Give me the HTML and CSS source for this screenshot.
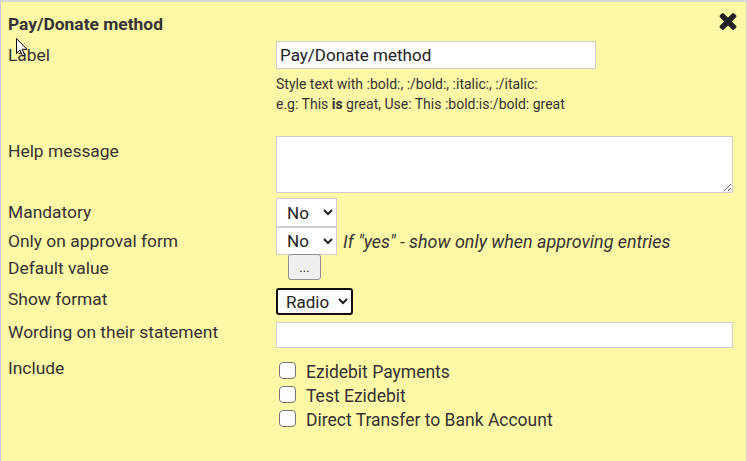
FILE: index.html
```html
<!DOCTYPE html>
<html lang="en">
<head>
<meta charset="utf-8">
<title>Pay/Donate method</title>
<link rel="stylesheet" href="styles.css">
</head>
<body>
<div class="panel">
  <div class="head">
    <h1 class="title">Pay/Donate method</h1>
    <button class="close" type="button" aria-label="Close">
      <svg viewBox="110 366 1188 1188" width="18" height="17"><path fill="#222" d="M1298 1322q0 40-28 68l-136 136q-28 28-68 28t-68-28l-294-294-294 294q-28 28-68 28t-68-28l-136-136q-28-28-28-68t28-68l294-294-294-294q-28-28-28-68t28-68l136-136q28-28 68-28t68 28l294 294 294-294q28-28 68-28t68 28l136 136q28 28 28 68t-28 68l-294 294 294 294q28 28 28 68z"/></svg>
    </button>
  </div>

  <div class="row row-label">
    <div class="lbl">Label</div>
    <div class="val">
      <input class="text short" type="text" value="Pay/Donate method">
      <div class="hint">Style text with :bold:, :/bold:, :italic:, :/italic:</div>
      <div class="hint">e.g: This <b>is</b> great, Use: This :bold:is:/bold: great</div>
    </div>
  </div>

  <div class="row row-help">
    <div class="lbl">Help message</div>
    <div class="val"><textarea class="area"></textarea></div>
  </div>

  <div class="row row-mand">
    <div class="lbl">Mandatory</div>
    <div class="val"><select class="sel"><option>No</option><option>Yes</option></select></div>
  </div>

  <div class="row row-appr">
    <div class="lbl">Only on approval form</div>
    <div class="val inline"><select class="sel"><option>No</option><option>Yes</option></select><span class="note">If "yes" - show only when approving entries</span></div>
  </div>

  <div class="row row-def">
    <div class="lbl">Default value</div>
    <div class="val"><button class="dots" type="button">...</button></div>
  </div>

  <div class="row row-fmt">
    <div class="lbl">Show format</div>
    <div class="val"><select class="sel focus"><option>Radio</option><option>Dropdown</option></select></div>
  </div>

  <div class="row row-word">
    <div class="lbl">Wording on their statement</div>
    <div class="val"><input class="text wide" type="text" value=""></div>
  </div>

  <div class="row row-inc">
    <div class="lbl">Include</div>
    <div class="val checks">
      <label class="chk"><input type="checkbox"><span>Ezidebit Payments</span></label>
      <label class="chk"><input type="checkbox"><span>Test Ezidebit</span></label>
      <label class="chk"><input type="checkbox"><span>Direct Transfer to Bank Account</span></label>
    </div>
  </div>

  <svg class="cursor" viewBox="0 0 12 19" width="12" height="19"><path d="M0.5 0.5 L0.5 15.5 L4 12 L6.5 17.8 L8.6 16.9 L6.2 11.3 L11 11.3 Z" fill="#fff" stroke="#000" stroke-width="1"/></svg>
</div>
</body>
</html>
```
FILE: styles.css
```css
html, body {
  margin: 0;
  padding: 0;
  background: #fff8a6;
}
body {
  font-family: Roboto, "Noto Sans", "Liberation Sans", sans-serif;
  color: #333;
}
.panel {
  position: relative;
  box-sizing: border-box;
  width: 747px;
  height: 461px;
  border-top: 2px solid #d9d9d9;
  border-left: 1px solid #c9c9df;
  border-right: 1px solid #cfcfcf;
  padding-left: 7px;
  background: #fff8a6;
}
.head {
  box-sizing: border-box;
  display: flex;
  align-items: flex-start;
  justify-content: space-between;
  height: 35px;
  padding: 12px 9px 0 0;
}
.title {
  margin: 0;
  font-size: 17.4px;
  font-weight: 700;
  line-height: 20px;
}
.close {
  border: 0;
  background: none;
  padding: 0;
  display: flex;
  margin-top: -1px;
}
.row {
  display: flex;
  align-items: flex-start;
}
.lbl {
  width: 268px;
  flex: none;
  font-size: 17.4px;
  line-height: 20px;
}
.val {
  flex: 1;
  min-width: 0;
}
.inline {
  display: flex;
  align-items: center;
}
.text {
  box-sizing: border-box;
  display: block;
  border: 1px solid #cfcfcf;
  background: #fff;
  font-family: inherit;
  color: #222;
  padding: 0 3px;
  margin: 0;
  outline: none;
}
.short {
  width: 320px;
  height: 28px;
  font-size: 17px;
}
.wide {
  width: 457px;
  height: 26px;
  font-size: 16px;
}
.hint {
  font-size: 14px;
  line-height: 20px;
  color: #333;
}
.hint b { font-weight: 700; }
.row-label { margin-top: 4px; }
.row-label .lbl { padding-top: 4px; }
.row-label .text { margin-bottom: 5px; }
.row-help { margin-top: 22px; }
.row-help .lbl { padding-top: 5px; }
.area {
  box-sizing: border-box;
  display: block;
  width: 457px;
  height: 57px;
  border: 1px solid #cfcfcf;
  background: #fff;
  margin: 0;
  font-family: inherit;
}
.row-mand { margin-top: 5px; }
.row-mand .lbl { padding-top: 4px; }
.sel {
  box-sizing: border-box;
  height: 29px;
  border: 1px solid #d0d0d0;
  border-radius: 0;
  background: #fff;
  font-family: inherit;
  font-size: 17px;
  color: #222;
  padding: 0 4px 0 6px;
  margin: 0;
}
.row-mand .sel, .row-appr .sel { width: 61px; }
.row-appr .sel { height: 28px; }
.row-appr .lbl { padding-top: 4px; }
.note {
  font-style: italic;
  font-size: 17.9px;
  margin-left: 6px;
  color: #333;
}
.row-def { height: 29px; }
.row-def .lbl { padding-top: 3px; }
.dots {
  box-sizing: border-box;
  width: 33px;
  height: 26px;
  margin: -1px 0 0 12px;
  border: 1px solid #8f8f8f;
  border-radius: 3px;
  background: #efefef;
  font-family: inherit;
  font-size: 13px;
  color: #333;
  padding: 0;
}
.row-fmt { margin-top: 4px; }
.row-fmt .lbl { padding-top: 1px; }
.focus {
  width: 77px;
  height: 27px;
  border: 2px solid #101010;
  border-radius: 3px;
  padding-left: 4px;
}
.row-word { margin-top: 7px; }
.row-inc { margin-top: 10px; }
.checks {
  display: flex;
  flex-direction: column;
}
.chk {
  display: flex;
  align-items: center;
  height: 24px;
  font-size: 17.5px;
}
.chk input {
  appearance: none;
  -webkit-appearance: none;
  box-sizing: border-box;
  width: 17px;
  height: 17px;
  margin: 0 10px 0 3px;
  border: 1.5px solid #767676;
  border-radius: 4px;
  background: #fff;
}
.chk span { padding-top: 3px; }
.cursor {
  position: absolute;
  left: 15px;
  top: 36px;
}
```
